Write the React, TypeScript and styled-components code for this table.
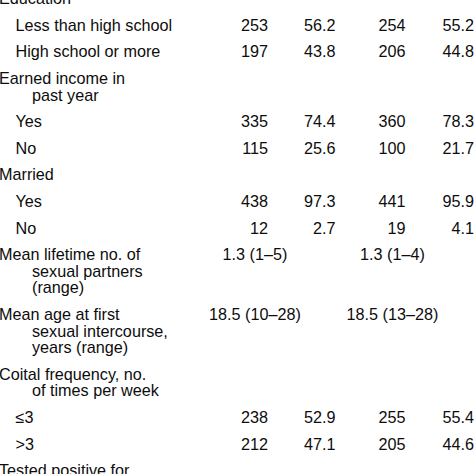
import React from "react";
import styled, { createGlobalStyle } from "styled-components";

const Global = createGlobalStyle`
  html, body { margin: 0; padding: 0; background: #ffffff; }
  body { width: 474px; height: 474px; overflow: hidden; }
`;

const Table = styled.div`
  display: flex;
  flex-direction: column;
  width: 475px;
  margin-top: -14.75px;
  margin-left: -1px;
  font-family: "Liberation Sans", Arial, Helvetica, sans-serif;
  font-size: 16.2px;
  line-height: 16.6px;
  color: #0d0d0d;
`;

const Row = styled.div`
  display: grid;
  grid-template-columns: 1fr 38px 67.5px 70px 68.5px;
  padding: 5px 0;
`;

const Label = styled.div<{ $sub?: boolean }>`
  grid-column: 1;
  padding-left: ${(p) => (p.$sub ? "16.5px" : "0")};
  white-space: nowrap;
`;

const Cont = styled.span`
  display: block;
  padding-left: 33px;
`;

const Num = styled.div`
  text-align: right;
  align-self: start;
  white-space: nowrap;
`;

const Mean = styled.div<{ $col: number }>`
  grid-column: ${(p) => p.$col};
  justify-self: end;
  align-self: start;
  width: 26px;
  display: flex;
  justify-content: center;
  white-space: nowrap;
`;

type RowData = {
  lines: string[];
  sub?: boolean;
  nums?: string[];
  means?: string[];
};

const rows: RowData[] = [
  { lines: ["Education"] },
  { lines: ["Less than high school"], sub: true, nums: ["253", "56.2", "254", "55.2"] },
  { lines: ["High school or more"], sub: true, nums: ["197", "43.8", "206", "44.8"] },
  { lines: ["Earned income in", "past year"] },
  { lines: ["Yes"], sub: true, nums: ["335", "74.4", "360", "78.3"] },
  { lines: ["No"], sub: true, nums: ["115", "25.6", "100", "21.7"] },
  { lines: ["Married"] },
  { lines: ["Yes"], sub: true, nums: ["438", "97.3", "441", "95.9"] },
  { lines: ["No"], sub: true, nums: ["12", "2.7", "19", "4.1"] },
  { lines: ["Mean lifetime no. of", "sexual partners", "(range)"], means: ["1.3 (1–5)", "1.3 (1–4)"] },
  { lines: ["Mean age at first", "sexual intercourse,", "years (range)"], means: ["18.5 (10–28)", "18.5 (13–28)"] },
  { lines: ["Coital frequency, no.", "of times per week"] },
  { lines: ["≤3"], sub: true, nums: ["238", "52.9", "255", "55.4"] },
  { lines: [">3"], sub: true, nums: ["212", "47.1", "205", "44.6"] },
  { lines: ["Tested positive for"] },
];

export default function App() {
  return (
    <>
      <Global />
      <Table>
        {rows.map((r, i) => (
          <Row key={i}>
            <Label $sub={r.sub}>
              {r.lines[0]}
              {r.lines.slice(1).map((l, j) => (
                <Cont key={j}>{l}</Cont>
              ))}
            </Label>
            {r.nums && r.nums.map((n, j) => <Num key={j}>{n}</Num>)}
            {r.means && (
              <>
                <Mean $col={2}>{r.means[0]}</Mean>
                <Mean $col={4}>{r.means[1]}</Mean>
              </>
            )}
          </Row>
        ))}
      </Table>
    </>
  );
}
